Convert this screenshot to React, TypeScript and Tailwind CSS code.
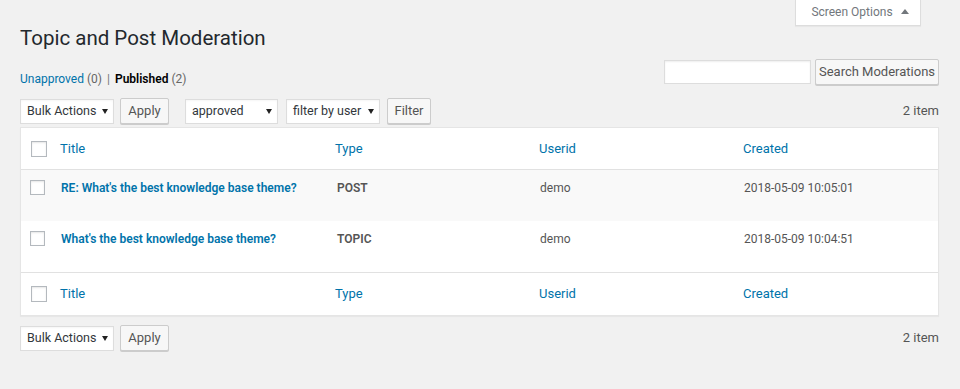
import React from "react";

const rows = [
  { title: "RE: What's the best knowledge base theme?", type: "POST", user: "demo", created: "2018-05-09 10:05:01", alt: true },
  { title: "What's the best knowledge base theme?", type: "TOPIC", user: "demo", created: "2018-05-09 10:04:51", alt: false },
];

const Arrow = () => (
  <svg width="6" height="5" viewBox="0 0 6 5" className="shrink-0">
    <path d="M0 0 L6 0 L3 5 Z" fill="#222" />
  </svg>
);

const Select = ({ label, w }: { label: string; w: string }) => (
  <div className={`flex h-[25px] items-center justify-between whitespace-nowrap border border-[#ddd] bg-white pl-[6px] pr-[5px] text-[12.5px] text-[#32373c] shadow-[inset_0_1px_2px_rgba(0,0,0,0.04)] ${w}`}>
    <span>{label}</span>
    <Arrow />
  </div>
);

const Button = ({ label, w }: { label: string; w: string }) => (
  <div className={`flex h-[26px] items-center justify-center whitespace-nowrap rounded-[2px] border border-[#ccc] bg-[#f7f7f7] text-[13px] text-[#555] shadow-[0_1px_0_#ccc] ${w}`}>
    {label}
  </div>
);

const Check = ({ className = "" }: { className?: string }) => (
  <div className={`h-[15px] w-[15px] border border-[#b4b9be] bg-white shadow-[inset_0_1px_2px_rgba(0,0,0,0.1)] ${className}`} />
);

const HeadRow = ({ border }: { border: "top" | "bottom" }) => (
  <div
    className={`grid grid-cols-[39px_275px_204px_204px_1fr] items-center text-[13px] text-[#0073aa] ${
      border === "bottom" ? "h-[42px] border-b border-[#e1e1e1]" : "h-[43px] border-t border-[#e1e1e1]"
    }`}
  >
    <div className="pl-[10px]">
      <Check className="h-[16px] w-[16px]" />
    </div>
    <div>Title</div>
    <div>Type</div>
    <div>Userid</div>
    <div>Created</div>
  </div>
);

const BulkBar = () => (
  <div className="flex items-center">
    <Select label="Bulk Actions" w="w-[94px]" />
    <Button label="Apply" w="ml-[6px] w-[49px]" />
  </div>
);

export default function App() {
  return (
    <div className="min-h-[389px] w-[960px] bg-[#f1f1f1] pl-[20px] pr-[21px] font-['Roboto',sans-serif] text-[#444]">
      <div className="flex items-start justify-between">
        <h1 className="pt-[23px] text-[20.5px] leading-[30px] text-[#23282d]">Topic and Post Moderation</h1>
        <div className="mr-[18px] flex h-[26px] w-[126px] items-center justify-center gap-[8px] border border-t-0 border-[#ddd] bg-white pb-[2px] pl-[4px] text-[12px] text-[#72777c] shadow-[0_1px_1px_rgba(0,0,0,0.04)]">
          <span>Screen Options</span>
          <svg width="8" height="5" viewBox="0 0 8 5">
            <path d="M0 5 L8 5 L4 0 Z" fill="#72777c" />
          </svg>
        </div>
      </div>

      <div className="mt-[6px] flex items-start justify-between">
        <div className="pt-[10px] text-[12px] leading-[20px] text-[#666]">
          <span className="text-[#0073aa]">Unapproved</span> <span>(0)</span>
          <span className="mx-[5px] text-[#777]">|</span>
          <span className="font-semibold text-[#000]">Published</span> <span>(2)</span>
        </div>
        <div className="flex items-center">
          <div className="h-[24px] w-[147px] border border-[#ddd] bg-white shadow-[inset_0_1px_2px_rgba(0,0,0,0.07)]" />
          <Button label="Search Moderations" w="ml-[4px] w-[124px]" />
        </div>
      </div>

      <div className="mt-[9px] flex items-center">
        <BulkBar />
        <Select label="approved" w="ml-[16px] w-[93px]" />
        <Select label="filter by user" w="ml-[8px] w-[94px]" />
        <Button label="Filter" w="ml-[7px] w-[44px]" />
        <div className="ml-auto text-[13px] text-[#555]">2 item</div>
      </div>

      <div className="mt-[3px] border border-[#e5e5e5] bg-white shadow-[0_1px_1px_rgba(0,0,0,0.04)]">
        <HeadRow border="bottom" />
        {rows.map((r) => (
          <div
            key={r.title}
            className={`grid h-[51px] grid-cols-[39px_275px_204px_204px_1fr] items-start pt-[9px] text-[12px] text-[#555] ${r.alt ? "bg-[#f9f9f9]" : "bg-white"}`}
          >
            <div className="pl-[9px] pt-[1px]">
              <Check />
            </div>
            <div className="pl-[1px] font-semibold text-[#0073aa]">{r.title}</div>
            <div className="pl-[2px] font-semibold text-[#555]">{r.type}</div>
            <div className="pl-[1px]">{r.user}</div>
            <div className="pl-[1px]">{r.created}</div>
          </div>
        ))}
        <HeadRow border="top" />
      </div>

      <div className="mt-[9px] flex items-center">
        <BulkBar />
        <div className="ml-auto text-[13px] text-[#555]">2 item</div>
      </div>
    </div>
  );
}
